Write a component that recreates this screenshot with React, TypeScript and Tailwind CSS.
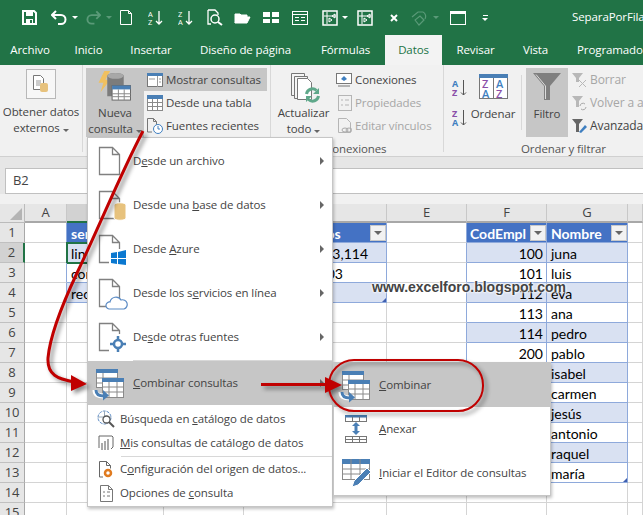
import React from 'react';

const Tri = ({ className = 'border-t-[#666]' }: { className?: string }) => (
  <span className={`inline-block w-0 h-0 border-x-[3px] border-x-transparent border-t-[3px] ${className}`} />
);

// quick access toolbar
const Qat = () => (
  <div className="flex items-center h-[35px] text-white relative">
    <svg className="ml-[22px]" width="15" height="15" viewBox="0 0 15 15"><path d="M1 1h11l2 2v11H1z" fill="none" stroke="#fff" strokeWidth="2" /><rect x="4" y="1" width="7" height="5" fill="#fff" /><rect x="4" y="9" width="7" height="5" fill="#fff" /><rect x="8" y="10" width="2" height="3" fill="#217346" /></svg>
    <svg className="ml-[14px]" width="16" height="15" viewBox="0 0 16 15"><path d="M5 1 1 5l4 4M1 5h9a4 4 0 0 1 0 9H7" fill="none" stroke="#fff" strokeWidth="2" /></svg>
    <span className="ml-[5px] flex"><Tri className="border-t-[#fff]" /></span>
    <svg className="ml-[8px]" width="15" height="15" viewBox="0 0 16 15"><path d="M11 1l4 4-4 4M15 5H6a4 4 0 0 0 0 9h3" fill="none" stroke="#5a9a78" strokeWidth="2" /></svg>
    <span className="ml-[5px] flex"><Tri className="border-t-[#5a9a78]" /></span>
    <svg className="ml-[8px]" width="12" height="15" viewBox="0 0 12 15"><path d="M.5.5h8l3 3v11H.5z" fill="none" stroke="#fff" /><path d="M8.500.5v3h3" fill="none" stroke="#fff" /></svg>
    <svg className="ml-[16px]" width="16" height="16" viewBox="0 0 16 16"><text x="0" y="7" fontSize="7.5" fill="#fff" fontFamily="Open Sans, sans-serif">A</text><text x="0" y="15" fontSize="7.5" fill="#fff" fontFamily="Open Sans, sans-serif">Z</text><path d="M11 1v13M8 11l3 3 3-3" fill="none" stroke="#fff" strokeWidth="1.3" /></svg>
    <svg className="ml-[14px]" width="16" height="16" viewBox="0 0 16 16"><text x="0" y="7" fontSize="7.5" fill="#fff" fontFamily="Open Sans, sans-serif">Z</text><text x="0" y="15" fontSize="7.5" fill="#fff" fontFamily="Open Sans, sans-serif">A</text><path d="M11 1v13M8 11l3 3 3-3" fill="none" stroke="#fff" strokeWidth="1.3" /></svg>
    <svg className="ml-[13px]" width="16" height="17" viewBox="0 0 16 17"><path d="M1 1h7l3 3v2M4 15H1V1" fill="none" stroke="#fff" strokeWidth="1.3" /><circle cx="8" cy="10" r="4" fill="none" stroke="#fff" strokeWidth="1.5" /><path d="m11 13 4 3" stroke="#fff" strokeWidth="2" /></svg>
    <svg className="ml-[11px]" width="17" height="13" viewBox="0 0 17 13"><path d="M1 12V3h5l1 1h6v2H4L1 12h12l3-6H4" fill="#fff" stroke="#fff" /></svg>
    <svg className="ml-[12px]" width="16" height="13" viewBox="0 0 16 13"><path d="M0 1h7v5H0zM9 1h7v5H9zM0 8h7v4H0zM9 8h7v4H9z" fill="#fff" /></svg>
    <svg className="ml-[13px]" width="16" height="14" viewBox="0 0 16 14"><rect x=".5" y=".5" width="15" height="13" fill="none" stroke="#fff" /><path d="M0 3h16v1H0zM3 6h4v1H3zM9 6h4v1H9zM3 9h4v1H3zM9 9h4v1H9z" fill="#fff" /></svg>
    <svg className="ml-[14px]" width="16" height="16" viewBox="0 0 16 16"><rect x="1" y="1" width="14" height="14" fill="none" stroke="#fff" strokeWidth="1.5" /><path d="M2 6h12M5 2v12M7 12V8l3 2zM13 4v4l-3-2z" fill="none" stroke="#fff" /></svg>
    <span className="ml-[4px] flex"><Tri className="border-t-[#fff]" /></span>
    <svg className="ml-[9px]" width="16" height="16" viewBox="0 0 16 16"><rect x="1" y="1" width="14" height="14" fill="none" stroke="#fff" strokeWidth="1.5" /><path d="M2 6h12M5 2v12M7 12V8l3 2zM13 4v4l-3-2z" fill="none" stroke="#fff" /></svg>
    <svg className="ml-[17px]" width="8" height="8" viewBox="0 0 8 8"><path d="m1 1 6 6M7 1 1 7" stroke="#fff" strokeWidth="2" /></svg>
    <svg className="ml-[13px]" width="17" height="16" viewBox="0 0 17 16"><path d="M1 7 7 2h5M4 10l4 5 5-5-4-4zM12 2a5 5 0 0 1 2 7" fill="none" stroke="#5a9a78" strokeWidth="1.2" /></svg>
    <span className="ml-[5px] flex"><Tri className="border-t-[#5a9a78]" /></span>
    <svg className="ml-[11px]" width="16" height="14" viewBox="0 0 16 14"><rect x=".5" y=".5" width="15" height="13" fill="none" stroke="#fff" /><rect x="0" y="0" width="16" height="3" fill="#fff" /></svg>
    <span className="ml-[16px] flex flex-col items-center gap-[2px]"><span className="w-[5px] h-px bg-white" /><Tri className="border-t-[#fff]" /></span>
    <span className="absolute left-[572px] top-[8px] text-[11.5px] text-white whitespace-nowrap">SeparaPorFilas</span>
  </div>
);

const tabs = [
  { label: 'Archivo', w: 'w-[60px]' },
  { label: 'Inicio', w: 'w-[57px]' },
  { label: 'Insertar', w: 'w-[68px]' },
  { label: 'Diseño de página', w: 'w-[121px]' },
  { label: 'Fórmulas', w: 'w-[79px]' },
  { label: 'Datos', w: 'w-[57px]', active: true },
  { label: 'Revisar', w: 'w-[67px]' },
  { label: 'Vista', w: 'w-[53px]' },
];

const TabBar = () => (
  <div className="flex h-[30px] text-[11.5px] text-white">
    {tabs.map((t) => (
      <div key={t.label} className={`${t.w} flex items-center justify-center shrink-0 ${t.active ? 'bg-[#f3f3f3] text-[#217346]' : ''}`}>
        {t.label}
      </div>
    ))}
    <div className="pl-[15px] flex items-center whitespace-nowrap">Programador</div>
  </div>
);

const TableIcon = ({ size = 16 }: { size?: number }) => (
  <svg width={size} height={size} viewBox="0 0 16 16"><rect x=".5" y=".5" width="15" height="15" fill="#fff" stroke="#8a8a8a" /><rect x="0" y="0" width="16" height="4" fill="#4a7fb5" /><path d="M0 7.500h16M0 11.500h16M5.500 4v12M10.500 4v12" stroke="#8a8a8a" /></svg>
);

const SmallBtn = ({ icon, label, cls = '' }: { icon: React.ReactNode; label: string; cls?: string }) => (
  <div className={`flex items-center h-[23px] gap-[3px] whitespace-nowrap ${cls}`}>
    <span className="w-[19px] flex justify-end shrink-0">{icon}</span>
    <span>{label}</span>
  </div>
);

const Ribbon = () => (
  <div className="flex h-[92px] bg-[#f1f1f1] border-b border-[#d0d0d0] text-[11.5px] leading-[16px] text-[#444] overflow-hidden">
    {/* Obtener datos externos */}
    <div className="w-[83px] shrink-0 flex flex-col items-center pt-[4px] border-r border-[#d8d8d8] mb-[4px]">
      <div className="w-[30px] h-[30px] bg-[#f7f7f7] border border-[#b8b8b8] flex items-center justify-center">
        <svg width="16" height="18" viewBox="0 0 16 18"><path d="M.5.5h7l3 3v11H.5z" fill="#fff" stroke="#777" /><path d="M3 6h5M3 8h5M3 10h4" stroke="#999" /><rect x="7" y="8" width="8" height="9" rx="2" fill="#e7c27d" /></svg>
      </div>
      <div className="mt-[5px] text-center">Obtener datos<br />externos <Tri /></div>
    </div>

    {/* Obtener y transformar */}
    <div className="w-[188px] shrink-0 flex pl-[3px] pt-[3px] border-r border-[#d8d8d8] mb-[4px]">
      <div className="w-[58px] h-[69px] bg-[#c6c6c6] flex flex-col items-center pt-[3px] shrink-0">
        <svg width="34" height="32" viewBox="0 0 34 32">
          <path d="M6 0h6L7 9h5L2 22l3-10H0z" fill="#f0c060" />
          <path d="M9 5c0-4 17-4 17 0v21H9z" fill="#7c7c7c" />
          <ellipse cx="17.500" cy="5" rx="8.500" ry="3" fill="#a8a8a8" />
          <rect x="14" y="15" width="19" height="15" fill="#fff" stroke="#666" />
          <rect x="14" y="15" width="19" height="4" fill="#4a7fb5" />
          <path d="M14 23.500h19M14 26.500h19M20.500 19v11M26.500 19v11" stroke="#888" />
        </svg>
        <div className="text-center mt-[3px]">Nueva<br />consulta <Tri /></div>
      </div>
      <div className="flex flex-col">
        <SmallBtn cls="bg-[#c6c6c6] w-[123px]" label="Mostrar consultas" icon={<svg width="16" height="14" viewBox="0 0 16 14"><rect x=".5" y=".5" width="15" height="13" fill="#fff" stroke="#777" /><rect width="16" height="3" fill="#4a7fb5" /><path d="M10.500 3v11M12 6h2M12 9h2M2 6h6" stroke="#999" /></svg>} />
        <SmallBtn label="Desde una tabla" icon={<TableIcon />} />
        <SmallBtn label="Fuentes recientes" icon={<svg width="16" height="16" viewBox="0 0 16 16"><path d="M.5.5h6l3 3v4M5 14H.5V.5M6.500.5v3h3" fill="none" stroke="#777" /><circle cx="11" cy="11" r="4.500" fill="#fff" stroke="#3f7fc0" /><path d="M11 8v3h2" fill="none" stroke="#3f7fc0" /></svg>} />
      </div>
    </div>

    {/* Conexiones */}
    <div className="w-[173px] shrink-0 flex flex-col border-r border-[#d8d8d8] mb-[4px] relative">
      <div className="flex pt-[3px]">
        <div className="w-[61px] pl-[4px] flex flex-col items-center pt-[5px] shrink-0">
          <svg className="ml-[4px]" width="30" height="30" viewBox="0 0 30 30"><path d="M.5.5h13v22H.5z" fill="#f5f5f5" stroke="#777" /><path d="M3.500 3.500h13v22h-13z" fill="#f5f5f5" stroke="#777" /><path d="M6.500 5.500h10l4 4v17h-14z" fill="#fff" stroke="#777" /><path d="M15.500 21a6 6 0 0 1 10-3.500M27.500 23a6 6 0 0 1-10 3.500" fill="none" stroke="#5fa88a" strokeWidth="3" /><path d="M28 15v6h-6zM15 29v-6h6z" fill="#5fa88a" /></svg>
          <div className="text-center mt-[2px]">Actualizar<br />todo <Tri /></div>
        </div>
        <div className="flex flex-col ml-[1px]">
          <SmallBtn label="Conexiones" icon={<svg width="16" height="14" viewBox="0 0 16 14"><rect x=".5" y=".5" width="15" height="10" fill="#fff" stroke="#777" /><path d="M8 3l3 3-3 2-3-2z" fill="#3f7fc0" /><path d="M2 13h12" stroke="#777" /></svg>} />
          <SmallBtn cls="text-[#a6a6a6]" label="Propiedades" icon={<svg width="14" height="16" viewBox="0 0 14 16"><rect x=".5" y=".5" width="13" height="15" fill="none" stroke="#b5b5b5" /><path d="M3 5h2M7 5h4M3 10h2M7 10h4" stroke="#b5b5b5" /></svg>} />
          <SmallBtn cls="text-[#a6a6a6]" label="Editar vínculos" icon={<svg width="14" height="16" viewBox="0 0 14 16"><path d="M.5.5h8l4 4v10H.5z" fill="none" stroke="#b5b5b5" /><ellipse cx="7" cy="12" rx="3" ry="2" fill="none" stroke="#aaa" /><ellipse cx="11" cy="12" rx="3" ry="2" fill="none" stroke="#aaa" /></svg>} />
        </div>
      </div>
      <div className="absolute top-[76px] left-[54px] text-[#555]">Conexiones</div>
    </div>

    {/* Ordenar y filtrar */}
    <div className="flex-1 flex flex-col relative">
      <div className="flex pt-[3px]">
        <div className="flex flex-col w-[24px] pl-[8px] pt-[11px] gap-[12px] shrink-0">
          <svg width="16" height="18" viewBox="0 0 16 18"><text x="0" y="8" fontSize="9" fontWeight="700" fill="#3f7fc0" fontFamily="Open Sans, sans-serif">A</text><text x="0" y="17" fontSize="9" fontWeight="700" fill="#8a4fa8" fontFamily="Open Sans, sans-serif">Z</text><path d="M11.500 1v15M9 13.500l2.500 2.500 2.500-2.500" fill="none" stroke="#555" /></svg>
          <svg width="16" height="18" viewBox="0 0 16 18"><text x="0" y="8" fontSize="9" fontWeight="700" fill="#8a4fa8" fontFamily="Open Sans, sans-serif">Z</text><text x="0" y="17" fontSize="9" fontWeight="700" fill="#3f7fc0" fontFamily="Open Sans, sans-serif">A</text><path d="M11.500 1v15M9 13.500l2.500 2.500 2.500-2.500" fill="none" stroke="#555" /></svg>
        </div>
        <div className="w-[50px] flex flex-col items-center shrink-0 pt-[6px]">
          <svg width="29" height="25" viewBox="0 0 29 25"><rect x=".5" y=".5" width="28" height="24" fill="#fff" stroke="#777" /><rect width="29" height="4" fill="#4a7fb5" /><path d="M14.500 4v21" stroke="#777" /><text x="3" y="14" fontSize="11" fontWeight="600" fill="#8a4fa8" fontFamily="Open Sans, sans-serif">Z</text><text x="3" y="24" fontSize="11" fontWeight="600" fill="#3f7fc0" fontFamily="Open Sans, sans-serif">A</text><text x="17" y="14" fontSize="11" fontWeight="600" fill="#3f7fc0" fontFamily="Open Sans, sans-serif">A</text><text x="17" y="24" fontSize="11" fontWeight="600" fill="#8a4fa8" fontFamily="Open Sans, sans-serif">Z</text></svg>
          <div className="mt-[7px]">Ordenar</div>
        </div>
        <div className="w-[5px] h-[55px] mt-[7px] ml-[3px] border-l border-[#d8d8d8] shrink-0" />
        <div className="w-[42px] h-[69px] bg-[#c6c6c6] flex flex-col items-center pt-[5px] shrink-0">
          <svg width="28" height="28" viewBox="0 0 28 28"><path d="M0 0h28L17 13v14h-6V13z" fill="#7f7f7f" /><path d="M3 1.500 12.500 13v13" fill="none" stroke="#dcdcdc" /></svg>
          <div className="mt-[5px]">Filtro</div>
        </div>
        <div className="flex flex-col whitespace-nowrap text-[12px]">
          <SmallBtn cls="text-[#a6a6a6]" label="Borrar" icon={<svg width="16" height="16" viewBox="0 0 16 16"><path d="M1 1h11L8 6v4H5V6z" fill="#b8b8b8" /><path d="m8 8 7 7M15 8l-7 7" stroke="#b8b8b8" /></svg>} />
          <SmallBtn cls="text-[#a6a6a6]" label="Volver a aplicar" icon={<svg width="16" height="16" viewBox="0 0 16 16"><path d="M1 1h11L8 6v6H5V6z" fill="#b8b8b8" /><path d="M9 11a3 3 0 0 1 5-2M15 12a3 3 0 0 1-5 2" fill="none" stroke="#a8a8a8" /></svg>} />
          <SmallBtn label="Avanzadas" icon={<svg width="16" height="16" viewBox="0 0 16 16"><path d="M1 1h11L8 6v8H5V6z" fill="#666" /><path d="m8 14 6-7 2 2-6 6z" fill="#3f7fc0" /></svg>} />
        </div>
      </div>
      <div className="absolute top-[76px] left-[77px] text-[#555]">Ordenar y filtrar</div>
    </div>
  </div>
);

const colW = ['w-[42px]', 'w-[97px]', 'w-[80px]', 'w-[143px]', 'w-[80px]', 'w-[80px]', 'w-[81px]', 'w-[15px]'];
const cols = ['A', 'B', 'C', 'D', 'E', 'F', 'G', ''];

const t1: Record<string, string> = {
  B1: 'ser', D1: 'CodEmpleados', B2: 'lin', D2: '100,101,112,113,114', B3: 'con', D3: '200,201,202,203', B4: 'rec',
};
const t2: Record<string, string> = {
  F1: 'CodEmpl', G1: 'Nombre', F2: '100', G2: 'juna', F3: '101', G3: 'luis', F4: '112', G4: 'eva', F5: '113', G5: 'ana',
  F6: '114', G6: 'pedro', F7: '200', G7: 'pablo', G8: 'isabel', G9: 'carmen', G10: 'jesús', G11: 'antonio', G12: 'raquel', G13: 'maría',
};

const FilterBtn = () => (
  <span className="w-[16px] h-[16px] bg-[#f2f2f2] border border-[#c8c8c8] flex items-center justify-center shrink-0">
    <span className="w-0 h-0 border-x-[4px] border-x-transparent border-t-[4px] border-t-[#666]" />
  </span>
);

const Cell = ({ c, r }: { c: number; r: number }) => {
  const name = cols[c];
  const key = `${name}${r}`;
  const inTable = (['B', 'C', 'D'].includes(name) && r <= 4) || (['F', 'G'].includes(name) && r <= 13);
  const isHead = inTable && r === 1;
  const band = inTable && r % 2 === 0;
  const leftOfTable = name === 'A' ? r <= 4 : name === 'E' && r <= 13;
  const text = t1[key] ?? t2[key] ?? '';
  const right = name === 'F' && r > 1;
  const selected = key === 'B2';
  const corner = key === 'D4' || key === 'G13';
  return (
    <div
      className={`${colW[c]} h-[20px] shrink-0 border-b border-r flex items-center text-[14px] tracking-normal text-black whitespace-nowrap overflow-hidden relative
        ${name === 'F' ? 'pl-[3px]' : 'pl-[4px]'}
        ${inTable ? 'border-b-[#8ea9db]' : 'border-b-[#d4d4d4]'}
        ${inTable || leftOfTable ? 'border-r-[#8ea9db]' : 'border-r-[#d4d4d4]'}
        ${isHead ? 'bg-[#4472c4] text-white font-bold justify-between' : ''}
        ${band ? 'bg-[#d9e1f2]' : ''}
        ${right ? 'justify-end pr-[3px]' : ''}
        ${key === 'D2' ? 'justify-end pr-[18px]' : ''}
        ${key === 'D3' ? 'justify-end pr-[43px]' : ''}
        ${selected ? 'outline-2 -outline-offset-1 outline-[#217346]' : ''}`}
    >
      <span className="pt-[1px]">{text}</span>
      {isHead && (name === 'D' || name === 'F' || name === 'G') && <FilterBtn />}
      {corner && <span className="absolute right-0 bottom-0 w-0 h-0 border-l-[4px] border-l-transparent border-b-[4px] border-b-[#3f5fb0]" />}
    </div>
  );
};

const Sheet = () => (
  <div className="font-['Lato',sans-serif]">
    <div className="flex h-[19px] font-['Open_Sans',sans-serif] text-[13px] text-[#444]">
      <div className="w-[25px] bg-[#e6e6e6] border-r border-b border-[#bbb] relative shrink-0">
        <span className="absolute right-[2px] bottom-[2px] w-0 h-0 border-l-[12px] border-l-transparent border-b-[12px] border-b-[#b4b4b4]" />
      </div>
      {cols.map((n, i) => (
        <div key={i} className={`${colW[i]} shrink-0 flex items-center justify-center border-r border-[#c8c8c8] border-b-2 ${n === 'B' ? 'bg-[#d2d2d2] border-b-[#217346]' : 'bg-[#e6e6e6] border-b-[#a8a8a8]'}`}>
          {n}
        </div>
      ))}
    </div>
    {Array.from({ length: 15 }, (_, i) => i + 1).map((r) => (
      <div key={r} className="flex h-[20px]">
        <div className={`w-[25px] shrink-0 flex items-center justify-center font-['Open_Sans',sans-serif] text-[13px] text-[#444] border-b ${r === 2 ? 'bg-[#d2d2d2] border-b-[#c0c0c0] border-r-2 border-r-[#217346]' : 'bg-[#e6e6e6] border-b-[#c0c0c0] border-r border-r-[#a8a8a8]'}`}>
          {r}
        </div>
        {cols.map((_, c) => <Cell key={c} c={c} r={r} />)}
      </div>
    ))}
  </div>
);

const MenuDoc = ({ children }: { children?: React.ReactNode }) => (
  <svg width="30" height="30" viewBox="0 0 30 30" className="shrink-0 overflow-visible">
    <path d="M2.500 1.500h13l7 7v20h-20zM15.500 1.500v7h7" fill="#fff" stroke="#808080" strokeWidth="1.3" />
    {children}
  </svg>
);

const Item = ({ icon, children, arrow = true }: { icon: React.ReactNode; children: React.ReactNode; arrow?: boolean }) => (
  <div className="flex items-center h-[44px] pl-[9px] relative">
    <span className="w-[36px] shrink-0">{icon}</span>
    <span>{children}</span>
    {arrow && <span className="absolute right-[8px] w-0 h-0 border-y-[4px] border-y-transparent border-l-[4px] border-l-[#666]" />}
  </div>
);

const SmallItem = ({ icon, children }: { icon: React.ReactNode; children: React.ReactNode }) => (
  <div className="flex items-center h-[24px] pl-[4px]">
    <span className="w-[28px] shrink-0 flex justify-center">{icon}</span>
    <span>{children}</span>
  </div>
);

const CombineIcon = () => (
  <svg width="30" height="30" viewBox="0 0 30 30" className="shrink-0 overflow-visible">
    <rect x=".5" y="1.500" width="21" height="18" fill="#fff" stroke="#8a8a8a" />
    <rect x="0" y="1" width="22" height="4" fill="#4a7fb5" />
    <path d="M0 10h22M0 15h22M7 5v15" stroke="#8a8a8a" />
    <rect x="6.500" y="10.500" width="21" height="19" fill="#fff" stroke="#8a8a8a" />
    <rect x="6" y="10" width="22" height="4" fill="#4a7fb5" />
    <path d="M6 19h22M6 24h22M13 14v16M21 14v16" stroke="#8a8a8a" />
    <path d="M-1 22c0 4 3 6 9 6" fill="none" stroke="#fff" strokeWidth="5" />
    <path d="M0 22c0 4 3 6 8 6" fill="none" stroke="#4a7fb5" strokeWidth="3" />
    <path d="m7 22 6 5.500-6 5z" fill="#4a7fb5" />
  </svg>
);

const Menu = () => (
  <div className="absolute left-[87px] top-[137px] w-[246px] h-[370px] bg-white border border-[#c6c6c6] shadow-[1px_2px_3px_rgba(0,0,0,0.25)] pt-[1px] text-[11.5px] text-[#444]">
    <Item icon={<MenuDoc />}>D<u>e</u>sde un archivo</Item>
    <Item icon={<MenuDoc><path d="M17 15c0-3 12-3 12 0v13c0 3-12 3-12 0z" fill="#e7c27d" stroke="#fff" /></MenuDoc>}>Desde una <u>b</u>ase de datos</Item>
    <Item icon={<MenuDoc><rect x="12" y="15" width="18" height="16" fill="#fff" /><path d="m14 19 6-1v6h-6zm7-1 8-2v8h-8zM14 25h6v5l-6-1zm7 0h8v6l-8-1z" fill="#0a78d0" /></MenuDoc>}>Desde <u>A</u>zure</Item>
    <Item icon={<MenuDoc><path d="M12 31a3.500 3.500 0 0 1 1-7 6 6 0 0 1 11-2 4.500 4.500 0 0 1 3 9z" fill="#fff" stroke="#5b8bc5" strokeWidth="1.2" /></MenuDoc>}>Desde los s<u>e</u>rvicios en línea</Item>
    <Item icon={<MenuDoc><rect x="12" y="12" width="18" height="18" fill="#fff" /><circle cx="21" cy="22" r="4" fill="#fff" stroke="#4a7fb5" strokeWidth="2.500" /><path d="M21 14v5M21 25v5M13 22h5M24 22h5" stroke="#4a7fb5" strokeWidth="2.500" /></MenuDoc>}>De<u>s</u>de otras fuentes</Item>
    <div className="ml-[45px] h-[2px] border-b border-[#d8d8d8]" />
    <div className="bg-[#c6c6c6]">
      <Item icon={<span className="block -ml-[1px]"><CombineIcon /></span>}><u>C</u>ombinar consultas</Item>
    </div>
    <div className="pt-[2px]">
      <SmallItem icon={<svg width="18" height="18" viewBox="0 0 18 18"><circle cx="7.500" cy="7.500" r="6.500" fill="none" stroke="#5b8bc5" strokeDasharray="3 1" /><path d="M1 7h13M7.500 1v12" stroke="#9ab" /><circle cx="9.500" cy="9.500" r="3.500" fill="#fff" stroke="#555" strokeWidth="1.300" /><path d="m12 12 5 5" stroke="#555" strokeWidth="2" /></svg>}>Búsqueda en <u>c</u>atálogo de datos</SmallItem>
      <SmallItem icon={<svg width="16" height="16" viewBox="0 0 16 16"><path d="M1 13V1h13l1 1v10l-2 2" fill="none" stroke="#666" /><path d="M4 15V8M7 15V6M10 15V4" stroke="#555" /></svg>}><u>M</u>is consultas de catálogo de datos</SmallItem>
      <div className="ml-[33px] h-[2px] border-b border-[#d8d8d8]" />
      <SmallItem icon={<svg width="14" height="17" viewBox="0 0 14 17"><path d="M4 16H.5V.5h7l4 4v3M7.500.5v4h4" fill="none" stroke="#666" /><circle cx="9" cy="12" r="3" fill="none" stroke="#e07b20" strokeWidth="2.500" /></svg>}>C<u>o</u>nfiguración del origen de datos...</SmallItem>
      <SmallItem icon={<svg width="13" height="17" viewBox="0 0 13 17"><path d="M.5.5h8l4 4v12H.5zM8.500.5v4h4" fill="none" stroke="#777" /><path d="M3 7h2M7 7h3M3 11h2M7 11h3" stroke="#777" /></svg>}>Opciones de <u>c</u>onsulta</SmallItem>
    </div>
  </div>
);

const SubItem = ({ icon, children, active }: { icon: React.ReactNode; children: React.ReactNode; active?: boolean }) => (
  <div className={`flex items-center h-[44px] pl-[8px] ${active ? 'bg-[#c6c6c6]' : ''}`}>
    <span className="w-[37px] shrink-0">{icon}</span>
    <span>{children}</span>
  </div>
);

const SubMenu = () => (
  <div className="absolute left-[333px] top-[362px] w-[218px] h-[134px] bg-white border border-[#c6c6c6] shadow-[1px_2px_3px_rgba(0,0,0,0.25)] text-[11.5px] text-[#444]">
    <SubItem active icon={<CombineIcon />}><u>C</u>ombinar</SubItem>
    <SubItem icon={<svg width="30" height="30" viewBox="0 0 30 30"><rect x="3.500" y="1.500" width="21" height="6" fill="#fff" stroke="#777" /><rect x="3" y="1" width="22" height="2.500" fill="#4a7fb5" /><path d="M10.500 3v5M17.500 3v5" stroke="#777" /><path d="M14 8l-4 4h2.500v5H10l4 4 4-4h-2.500v-5H18z" fill="#4a7fb5" /><rect x="3.500" y="22.500" width="21" height="6" fill="#fff" stroke="#777" /><path d="M3 25.500h22M10.500 22v7M17.500 22v7" stroke="#777" /></svg>}><u>A</u>nexar</SubItem>
    <SubItem icon={<svg width="30" height="30" viewBox="0 0 30 30" className="overflow-visible"><rect x=".5" y="1.500" width="27" height="20" fill="#fff" stroke="#8a8a8a" /><rect x="0" y="1" width="28" height="5" fill="#4a7fb5" /><path d="M0 11h28M0 16h28M9 1v21M18 1v21" stroke="#8a8a8a" /><path d="m10 29 2-6 13-13 4 4-13 13z" fill="#4a7fb5" stroke="#fff" /></svg>}><u>I</u>niciar el Editor de consultas</SubItem>
  </div>
);

const Arrows = () => (
  <svg width="643" height="515" viewBox="0 0 643 515" className="absolute left-0 top-0 pointer-events-none drop-shadow-[3px_3px_2px_rgba(0,0,0,0.45)]">
    <path d="M143 131C120 175 100 225 77 273C62 305 50 335 48 358C47 375 58 379 74 382" fill="none" stroke="#c00000" strokeWidth="3" />
    <path d="M87 384 71 375v16z" fill="#c00000" />
    <path d="M261 384.500h66" fill="none" stroke="#c00000" strokeWidth="3" />
    <path d="M342 385 325 377v16z" fill="#c00000" />
    <rect x="329" y="360" width="154" height="51" rx="25" fill="none" stroke="#c00000" strokeWidth="2" />
  </svg>
);

export default function App() {
  return (
    <div className="relative w-[643px] h-[515px] overflow-hidden bg-white tracking-[-0.1px] font-['Open_Sans',sans-serif]">
      <div className="bg-[#217346]">
        <Qat />
        <TabBar />
      </div>
      <Ribbon />
      <div className="h-[11px] bg-[#e6e6e6]" />
      <div className="h-[26px] bg-[#e6e6e6] pl-[5px]">
        <div className="h-full bg-white border-b border-t border-l border-[#c0c0c0] pl-[7px] flex items-center text-[13px] text-[#444]">B2</div>
      </div>
      <div className="h-[10px] bg-[#f1f1f1]" />
      <Sheet />
      <Menu />
      <SubMenu />
      <Arrows />
      <div className="absolute left-[372px] top-[279px] leading-[16px] tracking-normal font-['Liberation_Sans',sans-serif] font-bold text-[14px] text-[#444] [text-shadow:0_0_2px_#fff,0_0_2px_#fff,0_0_3px_#fff] whitespace-nowrap">
        www.excelforo.blogspot.com
      </div>
    </div>
  );
}
